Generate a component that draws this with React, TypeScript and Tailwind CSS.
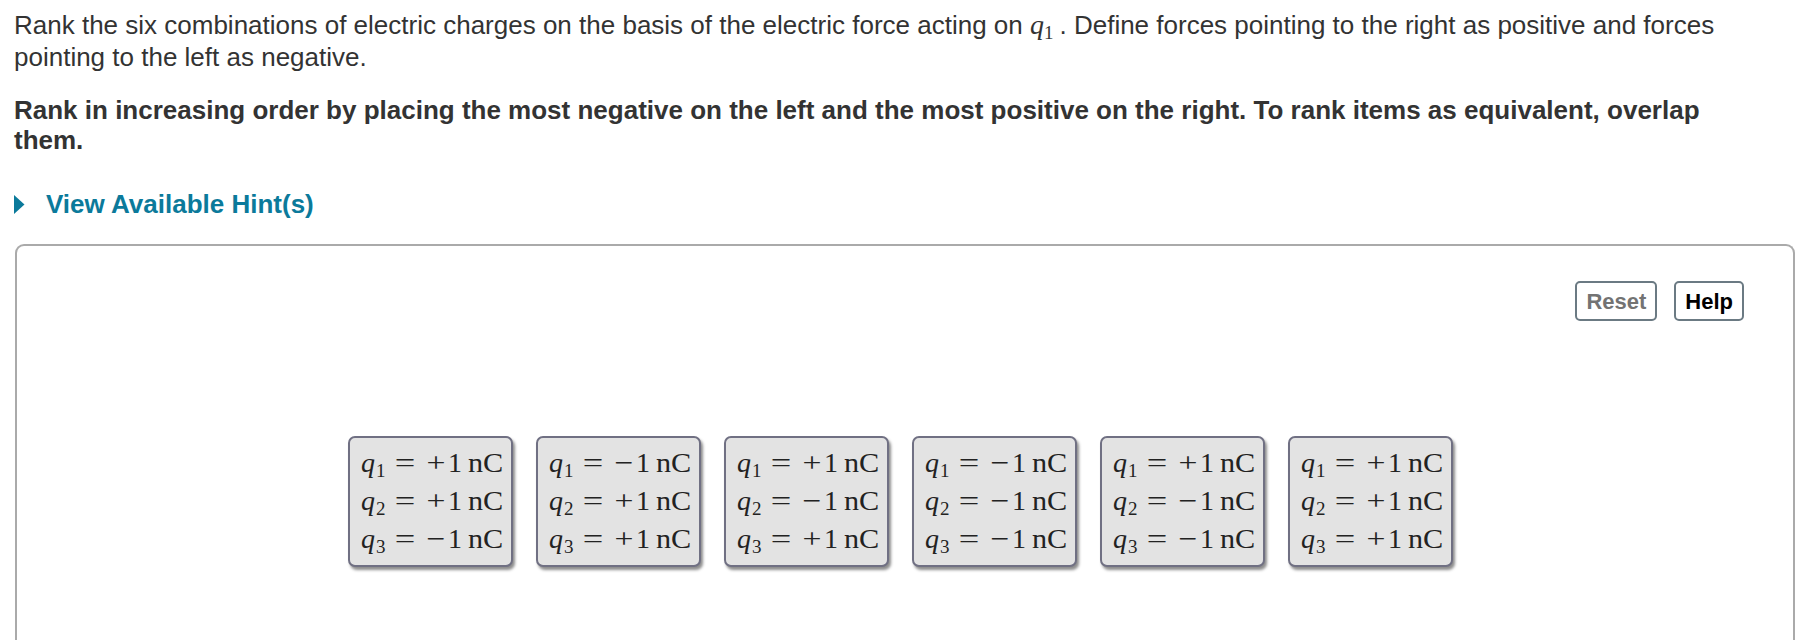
import React from 'react'

type Charge = '+' | '-'

const combos: Charge[][] = [
    ['+', '+', '-'],
    ['-', '+', '+'],
    ['+', '-', '+'],
    ['-', '-', '-'],
    ['+', '-', '-'],
    ['+', '+', '+'],
]

function ChargeRow({ index, sign }: { index: number; sign: Charge }) {
    return (
        <div className="flex items-baseline h-[38px] leading-[38px] whitespace-nowrap">
            <span className="italic">q</span>
            <span className="text-[19px] leading-none relative top-[5px] ml-[1px]">{index}</span>
            <span className="ml-[11px] inline-block scale-x-[1.3]">=</span>
            <span className="ml-[16px] inline-block scale-x-[1.2]">{sign === '+' ? '+' : '\u2212'}</span>
            <span className="ml-[4px]">1</span>
            <span className="ml-[6px] inline-block scale-x-[1.08] origin-left">nC</span>
        </div>
    )
}

function ChargeCard({ charges }: { charges: Charge[] }) {
    return (
        <div className="w-[165px] h-[131px] shrink-0 rounded-[7px] border-2 border-[#707083] bg-[#e3e3e3] shadow-[2px_3px_3px_rgba(0,0,0,0.45)] pl-[11px] pt-[6px] text-[28px] text-[#222] font-['Liberation_Serif',serif]">
            {charges.map((c, i) => (
                <ChargeRow key={i} index={i + 1} sign={c} />
            ))}
        </div>
    )
}

export default function App() {
    return (
        <div className="min-h-[640px] bg-white pt-[10px] font-['Liberation_Sans',Arial,sans-serif] text-[#333]">

            <div className="pl-[14px] pr-[50px] text-[26px] leading-[30px]">
                <p>
                    <span>Rank the six combinations of electric charges on the basis of the electric force acting on </span>
                    <span className="font-['Liberation_Serif',serif] italic text-[28px] leading-none">q</span>
                    <span className="font-['Liberation_Serif',serif] text-[19px] leading-none align-[-5px] mr-[6px]">1</span>
                    <span>. Define forces pointing to the right as positive and forces pointing to the left as negative.</span>
                </p>

                <p className="mt-[23px] font-bold">
                    Rank in increasing order by placing the most negative on the left and the most positive on the right. To rank items as equivalent, overlap them.
                </p>

                <button className="mt-[34px] flex items-center font-bold text-[#0b7a9b]">
                    <svg width="11" height="19" viewBox="0 0 11 19">
                        <path d="M0 0 L10.5 9.5 L0 19 Z" fill="#0b7a9b" />
                    </svg>
                    <span className="ml-[21px]">View Available Hint(s)</span>
                </button>
            </div>

            <div className="mt-[25px] ml-[15px] mr-[5px] h-[400px] rounded-t-[9px] border-2 border-b-0 border-[#aaaaaa] bg-white">
                <div className="flex justify-end gap-[17px] pt-[35px] pr-[49px]">
                    <button className="h-[40px] rounded-[5px] border-2 border-[#6b7a83] px-[9px] text-[22px] font-bold text-[#737373]">
                        Reset
                    </button>
                    <button className="h-[40px] rounded-[5px] border-2 border-[#6b7a83] px-[9px] text-[22px] font-bold text-black">
                        Help
                    </button>
                </div>

                <div className="mt-[115px] flex gap-[23px] pl-[331px]">
                    {combos.map((c, i) => (
                        <ChargeCard key={i} charges={c} />
                    ))}
                </div>
            </div>
        </div>
    )
}
